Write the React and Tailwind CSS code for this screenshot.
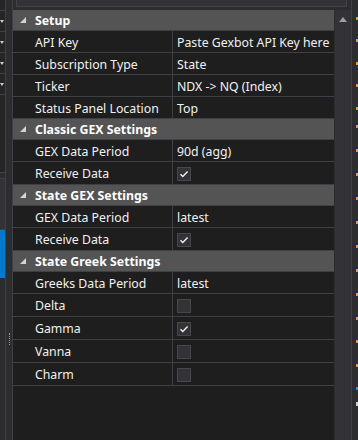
import React from "react"

const rows = [
  { head: "Setup" },
  { label: "API Key", value: "Paste Gexbot API Key here" },
  { label: "Subscription Type", value: "State" },
  { label: "Ticker", value: "NDX -> NQ (Index)" },
  { label: "Status Panel Location", value: "Top" },
  { head: "Classic GEX Settings" },
  { label: "GEX Data Period", value: "90d (agg)" },
  { label: "Receive Data", check: true },
  { head: "State GEX Settings" },
  { label: "GEX Data Period", value: "latest" },
  { label: "Receive Data", check: true },
  { head: "State Greek Settings" },
  { label: "Greeks Data Period", value: "latest" },
  { label: "Delta", check: false },
  { label: "Gamma", check: true },
  { label: "Vanna", check: false },
  { label: "Charm", check: false },
]

function Expander() {
  return (
    <svg width="6" height="6" viewBox="0 0 6 6" className="shrink-0">
      <polygon points="6,0 6,6 0,6" fill="#d4d4d4" />
    </svg>
  )
}

function CheckBox({ on }) {
  return (
    <div className="w-[14px] h-[14px] border border-[#46464b] bg-[#333337] flex items-center justify-center">
      {on && (
        <svg width="10" height="10" viewBox="0 0 10 10">
          <path d="M1.5 5.2l2.3 2.3L8.6 2.6" fill="none" stroke="#f1f1f1" strokeWidth="1.4" />
        </svg>
      )}
    </div>
  )
}

function Row({ r }) {
  if (r.head) {
    return (
      <div className="h-[21px] bg-[#545454] border-b border-[#3f3f46] flex items-center">
        <div className="w-[22px] flex justify-end pr-[9px]">
          <Expander />
        </div>
        <span className="font-bold text-white pt-[2px]">{r.head}</span>
      </div>
    )
  }
  const isCheck = r.check !== undefined
  const h = isCheck ? "h-[23px]" : "h-[22px]"
  return (
    <div className={`${h} flex border-b border-[#3f3f46] bg-[#1e1e1e]`}>
      <div className="w-[160px] shrink-0 pl-[22px] pt-[3px] flex items-center border-r border-[#3f3f46] text-[#f1f1f1] whitespace-nowrap">
        {r.label}
      </div>
      <div
        className={`flex-1 pl-[4px] flex items-center text-[#f1f1f1] whitespace-nowrap overflow-hidden ${isCheck ? "pt-[2px]" : "pt-[3px]"}`}
      >
        {isCheck ? <CheckBox on={r.check} /> : r.value}
      </div>
    </div>
  )
}

function LeftStrip() {
  return (
    <div className="w-[13px] shrink-0 flex h-full">
      <div className="w-[6px] flex flex-col bg-[#252526] border-r border-[#3f3f46]">
        <div className="h-[173px] flex flex-col border-b border-[#3f3f46]">
          <div className="h-[11px] border-b border-[#3f3f46]" />
          {[0, 1, 2, 3].map((i) => (
            <div key={i} className="h-[21px] border-b border-[#3f3f46] flex items-center">
              <svg width="4" height="3" viewBox="0 0 4 3">
                <polygon points="0,0 4,0 2,3" fill="#cfcfcf" />
              </svg>
            </div>
          ))}
        </div>
        <div className="h-[5px] bg-[#2d2d30]" />
        <div className="h-[52px] bg-[#333337] border-y border-[#3f3f46]" />
        <div className="h-[48px] bg-[#007acc]" />
        <div className="flex-1 bg-[#2d2d30]" />
      </div>
      <div className="w-[7px] bg-[#2d2d30] border-r border-[#3f3f46] flex flex-col items-center pt-[333px]">
        <div className="w-[1px] h-[12px] border-l border-dotted border-[#9a9a9a]" />
      </div>
    </div>
  )
}

function RightStrip() {
  return (
    <div className="w-[7px] shrink-0 border-l border-[#3f3f46] bg-[#2d2d30] flex flex-col items-end">
      <div className="w-[2px] h-[3px] bg-[#d8a233] mt-[17px]" />
      <div className="w-[2px] h-[3px] bg-[#d8a233] mt-[19px]" />
      <div className="w-[2px] h-[3px] bg-[#d8a233] mt-[20px]" />
      <div className="w-[2px] h-[3px] bg-[#d8a233] mt-[19px]" />
      <div className="w-[2px] h-[3px] bg-[#d8a233] mt-[20px]" />
      <div className="w-[2px] h-[3px] bg-[#d8a233] mt-[15px]" />
      <div className="w-[2px] h-[3px] bg-[#d8a233] mt-[21px]" />
      <div className="w-[2px] h-[3px] bg-[#d8a233] mt-[21px]" />
      <div className="w-[2px] h-[3px] bg-[#d8a233] mt-[21px]" />
      <div className="w-[2px] h-[3px] bg-[#d8a233] mt-[21px]" />
      <div className="w-[2px] h-[3px] bg-[#d8a233] mt-[21px]" />
      <div className="w-[2px] h-[3px] bg-[#d8a233] mt-[21px]" />
      <div className="w-[2px] h-[3px] bg-[#d8a233] mt-[21px]" />
      <div className="w-[2px] h-[3px] bg-[#d8a233] mt-[21px]" />
      <div className="w-[2px] h-[3px] bg-[#d8a233] mt-[20px]" />
      <div className="w-[2px] h-[3px] bg-[#d8a233] mt-[21px]" />
      <div className="w-[2px] h-[3px] bg-[#1c97ea] mt-[20px]" />
      <div className="w-[2px] h-[4px] bg-[#d0d0d0] mt-[12px]" />
    </div>
  )
}

export default function App() {
  return (
    <div className="w-[358px] h-[440px] flex bg-[#2d2d30] overflow-hidden text-[12.3px] leading-none font-['Noto_Sans',sans-serif]">
      <LeftStrip />
      <div className="flex-1 flex flex-col min-w-0">
        <div className="h-[10px] shrink-0 px-[3px] pr-[4px]">
          <div className="h-[22px] -mt-[15px] bg-[#333337] border border-[#434346] flex items-center px-[4px] text-[#999999]">
            Search
          </div>
        </div>
        <div className="flex-1 flex min-h-0">
          <div className="flex-1 bg-[#1e1e1e] min-w-0">
            {rows.map((r, i) => (
              <Row key={i} r={r} />
            ))}
          </div>
          <div className="w-[17px] shrink-0 bg-[#333337] border-l border-[#2d2d30] flex justify-center pt-[7px]">
            <svg width="8" height="5" viewBox="0 0 8 5">
              <polygon points="4,0 8,5 0,5" fill="#9e9e9e" />
            </svg>
          </div>
        </div>
      </div>
      <RightStrip />
    </div>
  )
}
